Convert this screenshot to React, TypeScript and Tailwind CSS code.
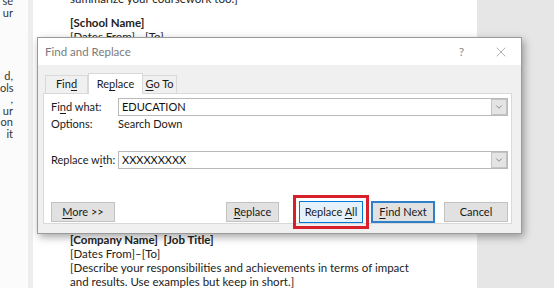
import { ChevronDown, X } from 'lucide-react'

const docFont = { fontFamily: '"Lato", "Open Sans", sans-serif' }

function Key({ children }: { children: string }) {
  return <span className="underline underline-offset-2">{children}</span>
}

function Button({
  children,
  className = '',
}: {
  children: React.ReactNode
  className?: string
}) {
  return (
    <div
      className={`h-[20px] flex items-center justify-center border text-[11px] text-[#1a1a1a] whitespace-pre ${className}`}
    >
      <span>{children}</span>
    </div>
  )
}

function Field({ value }: { value: string }) {
  return (
    <div className="flex-1 h-[18px] flex items-center border border-[#b9b9b9] bg-white">
      <span className="flex-1 pl-[3px] text-[11px] text-[#111]">{value}</span>
      <div className="w-[16px] h-[16px] flex items-center justify-center bg-[#e4e4e4] border border-[#c4c4c4]">
        <ChevronDown className="w-[10px] h-[10px] text-[#555]" strokeWidth={1.5} />
      </div>
    </div>
  )
}

export default function App() {
  return (
    <div
      className="relative w-[554px] h-[288px] overflow-hidden bg-[#e6e6e6] flex"
      style={{ fontFamily: '"Lato", "Open Sans", sans-serif' }}
    >
      {/* left page edge */}
      <div
        className="w-[28px] bg-[#fbfbfb] text-[11px] leading-[11.5px] text-[#333] text-right pr-[15px]"
        style={docFont}
      >
        <div className="-mt-[5px] whitespace-nowrap">
          <div>se</div>
          <div>ur</div>
          <div className="h-[52px]" />
          <div>d,</div>
          <div>ols</div>
          <div>,</div>
          <div>ur</div>
          <div>on</div>
          <div>it</div>
        </div>
      </div>
      <div className="w-[5px] bg-[#ededed]" />

      {/* document page */}
      <div className="w-[444px] bg-white pl-[37px] text-[11.5px] leading-[15px] text-[#222]" style={docFont}>
        <div className="-mt-[9px]">
          <div>summarize your coursework too.]</div>
          <div className="mt-[9px] font-bold">[School Name]</div>
          <div className="-mt-[1px]">[Dates From] - [To]</div>
          <div className="h-[189px]" />
          <div className="leading-[14px]">
            <div className="font-bold">[Company Name]&nbsp; [Job Title]</div>
            <div>[Dates From]–[To]</div>
            <div>[Describe your responsibilities and achievements in terms of impact</div>
            <div>and results. Use examples but keep in short.]</div>
          </div>
        </div>
      </div>

      {/* dialog */}
      <div className="absolute left-[37px] top-[37px] w-[485px] h-[197px] bg-[#f0f0f0] border border-[#9a9a9a] shadow-[2px_3px_8px_rgba(0,0,0,0.35)] flex flex-col">
        <div className="h-[27px] bg-white flex items-center pl-[7px] pr-[12px]">
          <span className="flex-1 text-[11.5px] text-[#7a7a7a]">Find and Replace</span>
          <span className="text-[12px] text-[#8a8a8a] mr-[29px]">?</span>
          <X className="w-[16px] h-[16px] text-[#8a8a8a]" strokeWidth={1} />
        </div>

        <div className="flex items-end pl-[7px] h-[28px]">
          <div className="w-[43px] h-[18px] flex items-center justify-center border border-b-0 border-[#d9d9d9] bg-[#f0f0f0] text-[11px] text-[#1a1a1a]">
            Fin<Key>d</Key>
          </div>
          <div className="w-[55px] h-[21px] flex items-center justify-center border border-b-0 border-[#d9d9d9] bg-white text-[11px] text-[#1a1a1a] -mb-[1px] relative z-10">
            Re<Key>p</Key>lace
          </div>
          <div className="w-[34px] h-[18px] flex items-center justify-center border border-b-0 border-l-0 border-[#d9d9d9] bg-[#f0f0f0] text-[11px] text-[#1a1a1a]">
            <Key>G</Key>o To
          </div>
        </div>

        <div className="ml-[5px] mr-[9px] h-[131px] bg-white border border-[#d9d9d9] pl-[7px] pr-[3px] pt-[4px] flex flex-col text-[11px] text-[#1a1a1a]">
          <div className="flex items-center h-[18px]">
            <span className="w-[67px] whitespace-nowrap">
              Fi<Key>n</Key>d what:
            </span>
            <Field value="EDUCATION" />
          </div>
          <div className="flex items-center h-[16px]">
            <span className="w-[67px]">Options:</span>
            <span>Search Down</span>
          </div>
          <div className="flex items-center h-[18px] mt-[19px]">
            <span className="w-[67px] whitespace-nowrap">
              Replace w<Key>i</Key>th:
            </span>
            <Field value="XXXXXXXXX" />
          </div>

          <div className="flex items-center mt-[32px]">
            <Button className="w-[64px] bg-[#e1e1e1] border-[#c2c2c2]">
              <Key>M</Key>ore &gt;&gt;
            </Button>
            <div className="flex-1" />
            <Button className="w-[53px] bg-[#e1e1e1] border-[#c2c2c2]">
              <Key>R</Key>eplace
            </Button>
            <Button className="ml-[20px] w-[64px] h-[22px] bg-[#e5f1fb] border-[#0078d7] outline-[3px] outline-solid outline-offset-[3px] outline-[#d8202c]">
              Replace <Key>A</Key>ll
            </Button>
            <Button className="ml-[8px] w-[64px] h-[22px] bg-[#e1e1e1] border-2 border-[#2f7fc9]">
              <Key>F</Key>ind Next
            </Button>
            <Button className="ml-[9px] w-[64px] bg-[#e1e1e1] border-[#c2c2c2]">Cancel</Button>
          </div>
        </div>
      </div>
    </div>
  )
}
